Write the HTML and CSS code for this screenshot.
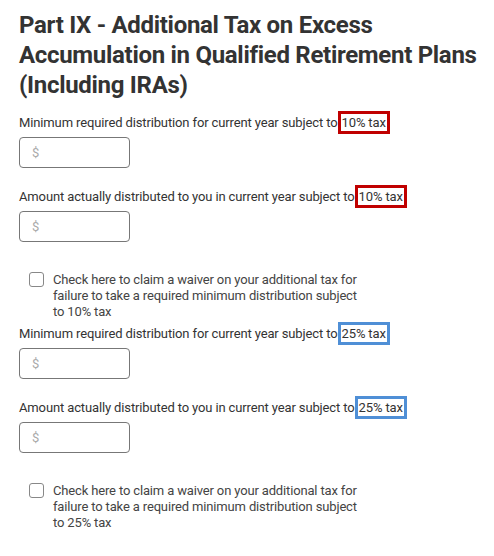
FILE: index.html
```html
<!DOCTYPE html>
<html>
<head>
  <meta charset="UTF-8">
  <title>Part IX</title>
  <link rel="stylesheet" href="styles.css">
</head>
<body>
  <div class="form">
    <h2>Part IX - Additional Tax on Excess Accumulation in Qualified Retirement Plans (Including IRAs)</h2>

    <div class="field">
      <label>Minimum required distribution for current year subject to <span class="mark red">10% tax</span></label>
      <input type="text" class="money" placeholder="$">
    </div>

    <div class="field">
      <label>Amount actually distributed to you in current year subject to <span class="mark red">10% tax</span></label>
      <input type="text" class="money" placeholder="$">
    </div>

    <div class="check">
      <span class="box"></span>
      <span class="check-text">Check here to claim a waiver on your additional tax for failure to take a required minimum distribution subject to 10% tax</span>
    </div>

    <div class="field">
      <label>Minimum required distribution for current year subject to <span class="mark blue">25% tax</span></label>
      <input type="text" class="money" placeholder="$">
    </div>

    <div class="field">
      <label>Amount actually distributed to you in current year subject to <span class="mark blue">25% tax</span></label>
      <input type="text" class="money" placeholder="$">
    </div>

    <div class="check">
      <span class="box"></span>
      <span class="check-text">Check here to claim a waiver on your additional tax for failure to take a required minimum distribution subject to 25% tax</span>
    </div>
  </div>
</body>
</html>
```

FILE: styles.css
```css
body {
  margin: 0;
  background: #fff;
  color: #333;
  font-family: Roboto, 'Liberation Sans', sans-serif;
}

.form {
  padding: 10px 10px 0 19px;
}

h2 {
  margin: 0 0 14px 0;
  font-size: 24px;
  line-height: 30px;
  font-weight: 700;
  letter-spacing: -0.3px;
  color: #333;
}

.field {
  margin-bottom: 20px;
}

.field label {
  display: block;
  font-size: 13px;
  line-height: 17px;
  letter-spacing: -0.13px;
  margin-bottom: 6px;
}

/* highlight boxes drawn around the tax rate */
.mark {
  outline: 3px solid;
  padding: 1px 1px;
}

.mark.red {
  outline-color: #c00000;
}

.mark.blue {
  outline-color: #4f8fd6;
}

.money {
  display: block;
  box-sizing: border-box;
  width: 111px;
  height: 31px;
  padding: 0 12px;
  border: 1px solid #777;
  border-radius: 4px;
  font-family: inherit;
  font-size: 13px;
  color: #333;
}

.money::placeholder {
  color: #aaa;
}

.check {
  display: flex;
  align-items: flex-start;
  margin: 30px 0 5px 10px;
}

.box {
  flex: none;
  width: 13px;
  height: 13px;
  margin-right: 9px;
  border: 1px solid #888;
  border-radius: 3px;
}

.check-text {
  max-width: 310px;
  font-size: 13px;
  line-height: 16px;
  letter-spacing: -0.15px;
  color: #444;
}
```
